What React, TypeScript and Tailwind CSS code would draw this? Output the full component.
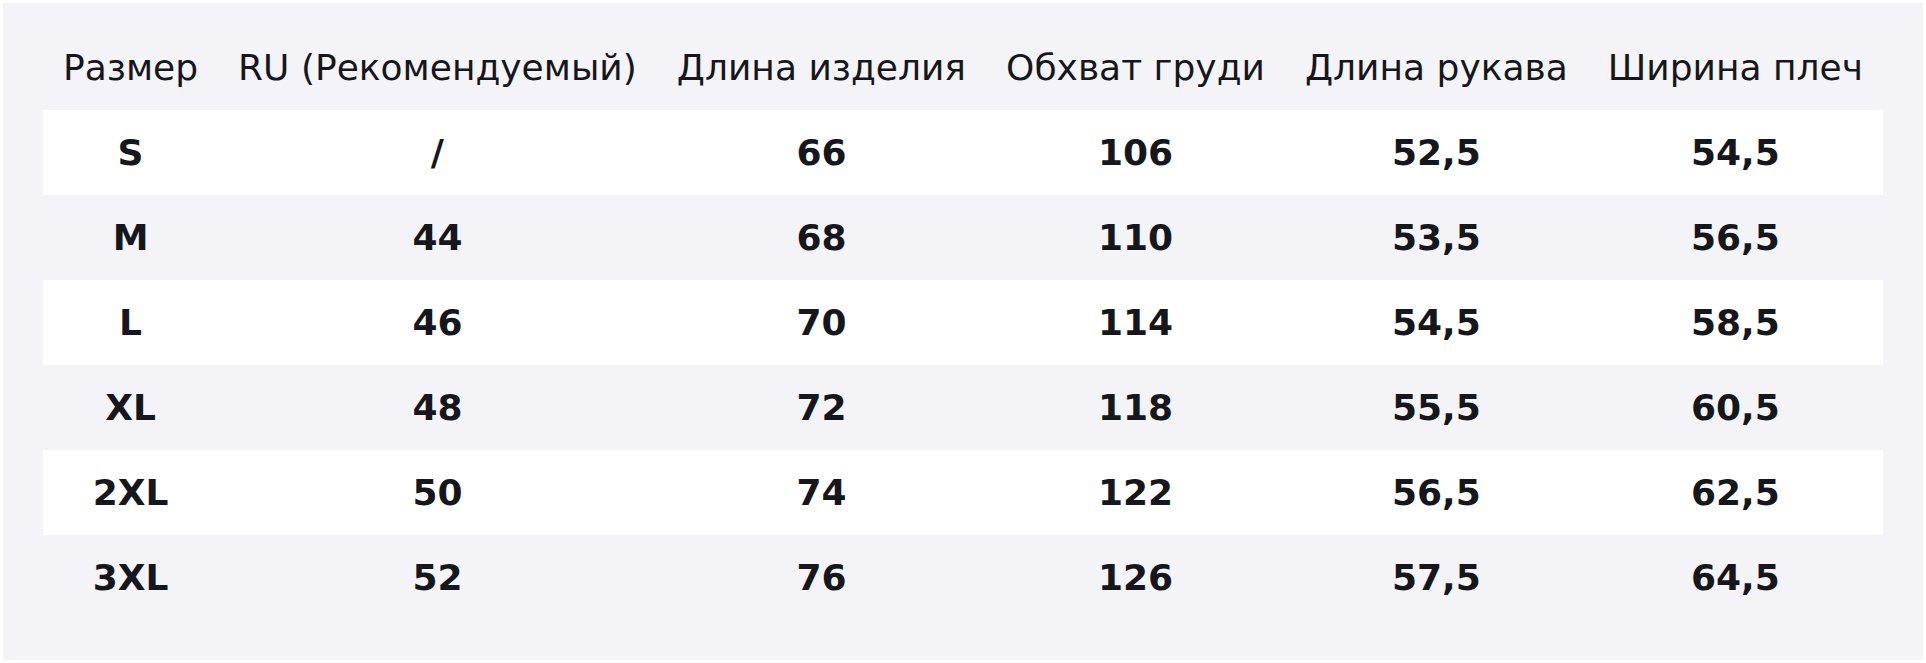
export default function App() {
  const head = [
    "Размер",
    "RU (Рекомендуемый)",
    "Длина изделия",
    "Обхват груди",
    "Длина рукава",
    "Ширина плеч",
  ];
  const rows = [
    ["S", "/", "66", "106", "52,5", "54,5"],
    ["M", "44", "68", "110", "53,5", "56,5"],
    ["L", "46", "70", "114", "54,5", "58,5"],
    ["XL", "48", "72", "118", "55,5", "60,5"],
    ["2XL", "50", "74", "122", "56,5", "62,5"],
    ["3XL", "52", "76", "126", "57,5", "64,5"],
  ];
  return (
    <div className="bg-white p-[3px] w-[1926px] h-[663px] font-['DejaVu_Sans',sans-serif] text-[#16161d]">
      <div className="bg-[#f4f4f8] h-[657px] px-[40px] pt-[22px]">
        <table className="w-full border-collapse text-center text-[36px]">
          <thead>
            <tr className="h-[85px]">
              {head.map((h) => (
                <th key={h} className="px-[20px] py-0 font-normal leading-[42px] whitespace-nowrap">
                  {h}
                </th>
              ))}
            </tr>
          </thead>
          <tbody>
            {rows.map((r, i) => (
              <tr key={r[0]} className={i % 2 === 0 ? "h-[85px] bg-white" : "h-[85px]"}>
                {r.map((c, j) => (
                  <td key={j} className="px-[20px] py-0 font-bold leading-[42px] whitespace-nowrap">
                    {c}
                  </td>
                ))}
              </tr>
            ))}
          </tbody>
        </table>
      </div>
    </div>
  );
}
